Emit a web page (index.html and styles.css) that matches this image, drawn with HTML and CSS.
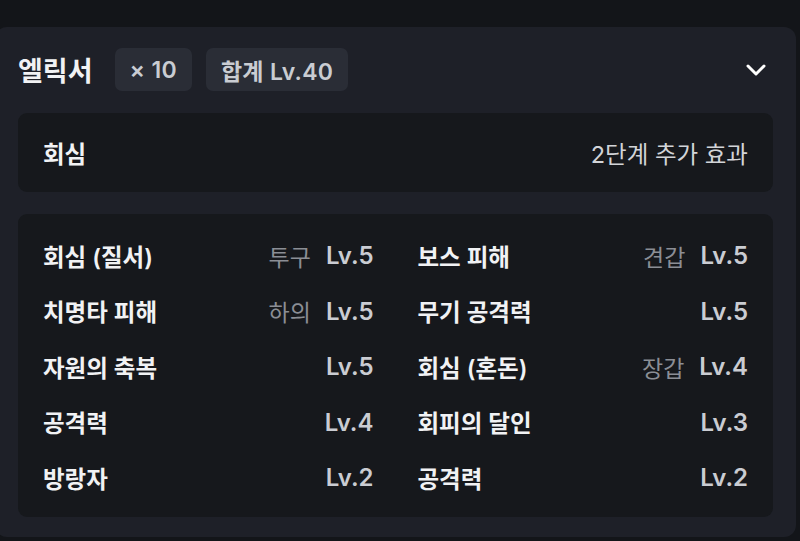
FILE: index.html
```html
<!DOCTYPE html>
<html lang="ko">
<head>
	<meta charset="utf-8">
	<title>엘릭서</title>
	<link rel="stylesheet" href="styles.css">
</head>
<body>
	<div class="card">
		<div class="card-head">
			<h2 class="title">엘릭서</h2>
			<span class="badge">× 10</span>
			<span class="badge">합계 Lv.40</span>
			<svg class="chevron" width="20" height="12" viewBox="0 0 20 12">
				<path d="M2 2 L10 10 L18 2" fill="none" stroke="#ffffff" stroke-width="3" stroke-linecap="round" stroke-linejoin="round"/>
			</svg>
		</div>

		<div class="box effect">
			<span class="name">회심</span>
			<span class="effect-note">2단계 추가 효과</span>
		</div>

		<div class="box list">
			<div class="row"><span class="name">회심 (질서)</span><span class="src">투구</span><span class="lv">Lv.5</span></div>
			<div class="row"><span class="name">보스 피해</span><span class="src">견갑</span><span class="lv">Lv.5</span></div>
			<div class="row"><span class="name">치명타 피해</span><span class="src">하의</span><span class="lv">Lv.5</span></div>
			<div class="row"><span class="name">무기 공격력</span><span class="lv">Lv.5</span></div>
			<div class="row"><span class="name">자원의 축복</span><span class="lv">Lv.5</span></div>
			<div class="row"><span class="name">회심 (혼돈)</span><span class="src">장갑</span><span class="lv">Lv.4</span></div>
			<div class="row"><span class="name">공격력</span><span class="lv">Lv.4</span></div>
			<div class="row"><span class="name">회피의 달인</span><span class="lv">Lv.3</span></div>
			<div class="row"><span class="name">방랑자</span><span class="lv">Lv.2</span></div>
			<div class="row"><span class="name">공격력</span><span class="lv">Lv.2</span></div>
		</div>
	</div>
</body>
</html>
```

FILE: styles.css
```css
body {
	margin: 0;
	background-color: #131519;
	font-family: Inter, "Noto Sans CJK KR", sans-serif;
	color: #f1f2f4;
	overflow: hidden;
}
.card {
	margin: 27px 4px 0 -5px;
	padding: 21px 23px 20px;
	background-color: #1e2028;
	border-radius: 12px;
}
.card-head {
	display: flex;
	align-items: center;
	height: 43px;
	margin-bottom: 22px;
}
.title {
	margin: 0 22px 0 0;
	font-family: "Noto Sans CJK KR", sans-serif;
	font-size: 27px;
	font-weight: 700;
}
.badge {
	display: flex;
	align-items: center;
	height: 43px;
	padding: 0 15px;
	margin-right: 14px;
	background-color: #2a2d36;
	border-radius: 7px;
	font-size: 23px;
	font-weight: 600;
	letter-spacing: 0.3px;
	color: #c9ccd2;
}
.chevron {
	margin-left: auto;
	margin-right: 7px;
}
.box {
	background-color: #16181c;
	border-radius: 9px;
}
.effect {
	display: flex;
	align-items: center;
	justify-content: space-between;
	height: 79px;
	padding: 0 25px;
	margin-bottom: 22px;
}
.name {
	font-size: 23.5px;
	font-weight: 600;
	color: #f1f2f4;
}
.effect-note {
	font-size: 23.5px;
	font-weight: 400;
	color: #d2d4d8;
}
.list {
	display: grid;
	grid-template-columns: 1fr 1fr;
	column-gap: 44px;
	padding: 14px 25px 11px;
}
.row {
	display: flex;
	align-items: center;
	height: 55.5px;
}
.row .name {
	flex: 1;
}
.src {
	margin-right: 15px;
	font-size: 23px;
	font-weight: 400;
	color: #8b8e95;
}
.lv {
	font-size: 24px;
	font-weight: 600;
	color: #caccd2;
}
```
